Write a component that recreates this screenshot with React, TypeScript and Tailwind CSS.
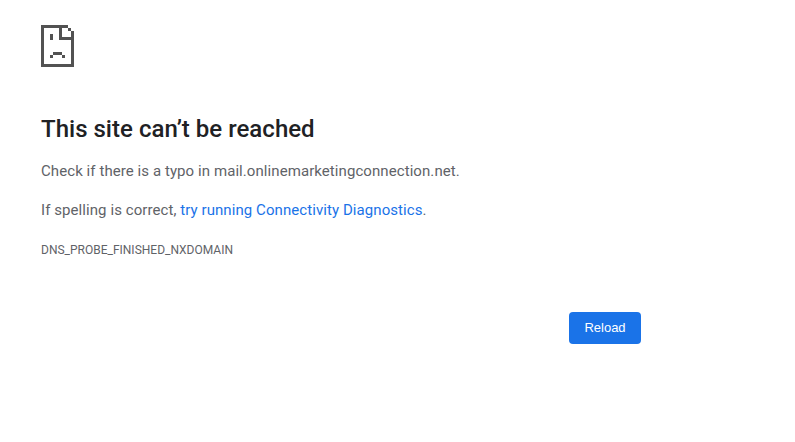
const SadPage = () => (
  <svg width="33" height="42" viewBox="0 0 33 42" fill="#525252" shapeRendering="crispEdges">
    <path d="M0 0h27v3H3v36h27V9h3v33H0z" />
    <path d="M18 3h3v9h12v3H18z" />
    <path d="M27 3h3v3h-3zM30 6h3v3h-3z" />
    <path d="M9 9h3v6H9z" />
    <path d="M12 27h9v3h-9zM9 30h3v3H9zM21 30h3v3h-3z" />
  </svg>
);

export default function App() {
  return (
    <div className="min-h-[442px] bg-white font-['Roboto',sans-serif] text-[15px] tracking-[0.075px] text-[#5f6368]">
      <div className="flex w-[600px] flex-col pl-[41px] pt-[25px] box-content">
        <SadPage />
        <h1 className="mt-[47px] text-[24px] leading-[30px] font-medium tracking-[0.02px] text-[#202124]">
          This site can’t be reached
        </h1>
        <p className="mt-[15px] leading-[25px]">
          Check if there is a typo in mail.onlinemarketingconnection.net.
        </p>
        <p className="mt-[14px] leading-[25px]">
          If spelling is correct,{" "}
          <a className="text-[#1a73e8]">try running Connectivity Diagnostics</a>.
        </p>
        <div className="mt-[19px] text-[12px] leading-[16px] tracking-normal text-[#5f6368]">
          DNS_PROBE_FINISHED_NXDOMAIN
        </div>
        <div className="mt-[54px] flex justify-end">
          <button
            type="button"
            className="h-[32px] w-[72px] rounded-[4px] bg-[#1a73e8] font-['Liberation_Sans',sans-serif] text-[13px] tracking-normal text-white"
          >
            Reload
          </button>
        </div>
      </div>
    </div>
  );
}
